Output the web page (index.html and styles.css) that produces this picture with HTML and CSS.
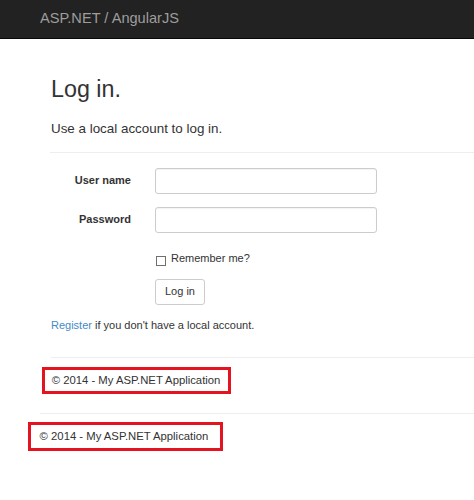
FILE: index.html
```html
<!DOCTYPE html>
<html lang="en">
<head>
<meta charset="utf-8">
<title>Log in</title>
<link rel="stylesheet" href="styles.css">
</head>
<body>
<nav class="navbar">
  <span class="brand">ASP.NET / AngularJS</span>
</nav>
<main class="body-content">
  <h2 class="title">Log in.</h2>
  <h4 class="subtitle">Use a local account to log in.</h4>
  <hr class="rule">
  <form class="login-form">
    <div class="form-row">
      <label class="form-label" for="user">User name</label>
      <input class="form-input" id="user" type="text">
    </div>
    <div class="form-row">
      <label class="form-label" for="pass">Password</label>
      <input class="form-input" id="pass" type="password">
    </div>
    <div class="check-row">
      <input class="check" id="remember" type="checkbox">
      <label class="check-label" for="remember">Remember me?</label>
    </div>
    <button class="btn" type="button">Log in</button>
  </form>
  <p class="register"><a class="link" href="#">Register</a> if you don't have a local account.</p>
  <hr class="rule rule-footer">
  <footer class="footer">
    <p class="boxed boxed-inner">&copy; 2014 - My ASP.NET Application</p>
  </footer>
</main>
<section class="outer">
  <hr class="rule rule-outer">
  <footer class="footer">
    <p class="boxed boxed-outer">&copy; 2014 - My ASP.NET Application</p>
  </footer>
</section>
</body>
</html>
```

FILE: styles.css
```css
html, body {
  margin: 0;
  padding: 0;
  background: #fff;
}
body {
  font-family: "Liberation Sans", Arial, Helvetica, sans-serif;
  font-size: 11px;
  line-height: 15.7px;
  color: #333;
  width: 474px;
  overflow: hidden;
}
.navbar {
  height: 38px;
  background: #222;
  border-bottom: 1px solid #080808;
  padding-left: 40px;
  box-sizing: content-box;
}
.brand {
  display: block;
  font-size: 14.6px;
  line-height: 37px;
  color: #9d9d9d;
}
.body-content {
  padding-left: 51px;
}
.title {
  margin: 38.4px 0 0;
  font-size: 23.3px;
  line-height: 25.6px;
  font-weight: normal;
  color: #333;
}
.subtitle {
  margin: 18.2px 0 0;
  font-size: 13.4px;
  line-height: 15.4px;
  font-weight: normal;
  color: #333;
}
.rule {
  height: 0;
  border: 0;
  border-top: 1px solid #eee;
  margin: 15.05px 0 15.65px -1px;
}
.login-form {
  display: flex;
  flex-direction: column;
  align-items: flex-start;
}
.form-row {
  display: flex;
  align-items: center;
  gap: 24px;
  margin-bottom: 13px;
}
.form-row:last-of-type {
  margin-bottom: 0;
}
.form-label {
  width: 80px;
  text-align: right;
  font-weight: bold;
  color: #333;
}
.form-input {
  width: 222px;
  height: 26px;
  box-sizing: border-box;
  border: 1px solid #ccc;
  border-radius: 3px;
  margin: 0;
  padding: 0 9px;
  font: inherit;
  background: #fff;
  box-shadow: inset 0 1px 1px rgba(0, 0, 0, 0.05);
}
.check-row {
  display: flex;
  align-items: center;
  gap: 5px;
  margin: 4.3px 0 0 104px;
}
.check {
  appearance: none;
  -webkit-appearance: none;
  width: 10px;
  height: 10px;
  box-sizing: border-box;
  border: 1px solid #6f6f6f;
  background: #fff;
  margin: 5px 0 0 1px;
}
.check-label {
  color: #333;
}
.btn {
  margin: 12.7px 0 0 104px;
  width: 50px;
  height: 26px;
  box-sizing: border-box;
  border: 1px solid #ccc;
  border-radius: 3px;
  background: #fff;
  color: #333;
  font: inherit;
  padding: 0;
}
.register {
  margin: 12.6px 0 0;
}
.link {
  color: #428bca;
  text-decoration: none;
}
.rule-footer {
  margin: 24px 0 8.4px 0;
}
.footer {
  display: flex;
}
.boxed {
  margin: 0;
  border: 3px solid #e3141f;
  white-space: nowrap;
  font-size: 11.3px;
}
.boxed-inner {
  margin-left: -9.3px;
  padding: 3.4px 8px 2.5px 7px;
}
.outer {
  padding-left: 40px;
}
.rule-outer {
  margin: 19px 0 7.4px 0;
}
.boxed-outer {
  margin-left: -11.7px;
  padding: 4px 11.4px 4px 8.3px;
}
```
